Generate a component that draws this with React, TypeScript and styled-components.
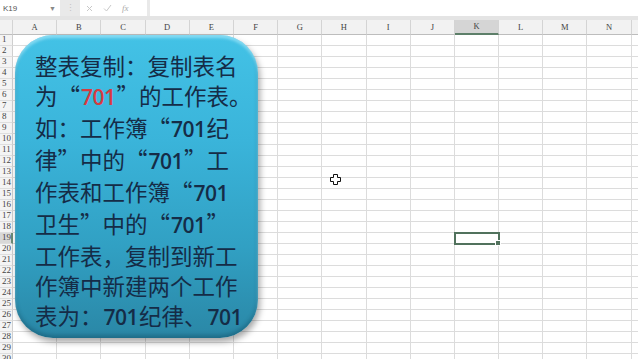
import React from "react";
import styled, { createGlobalStyle } from "styled-components";

const Global = createGlobalStyle`
  html, body { margin: 0; padding: 0; background: #ffffff; }
  body { width: 638px; height: 359px; overflow: hidden; font-family: "Liberation Sans", Arial, sans-serif; }
  #root { width: 638px; height: 359px; }
`;

const Page = styled.div`
  position: relative;
  width: 638px;
  height: 359px;
  overflow: hidden;
  display: flex;
  flex-direction: column;
  background: #ffffff;
`;

const FormulaBar = styled.div`
  display: flex;
  height: 16px;
  background: #e9e9e9;
  flex-shrink: 0;
`;

const NameBox = styled.div`
  width: 60px;
  background: #ffffff;
  display: flex;
  align-items: center;
  justify-content: space-between;
  padding: 0 4px 0 3px;
  box-sizing: border-box;
  font-family: "Liberation Sans", Arial, sans-serif;
  font-size: 8px;
  color: #555;
`;

const Caret = styled.span`
  font-size: 7px;
  color: #888;
`;

const Grip = styled.div`
  width: 20px;
  display: flex;
  align-items: center;
  justify-content: center;
  color: #c4c4c4;
  font-size: 9px;
`;

const IconArea = styled.div`
  width: 67px;
  background: #ffffff;
  display: flex;
  align-items: center;
  gap: 10px;
  padding-left: 6px;
  box-sizing: border-box;
`;

const Fx = styled.span`
  font-family: "Liberation Serif", serif;
  font-style: italic;
  font-size: 9px;
  color: #aaa;
`;

const FormulaInput = styled.div`
  flex: 1;
  margin-left: 3px;
  background: #ffffff;
`;

const Divider = styled.div`
  height: 4px;
  background: #e4e4e4;
  flex-shrink: 0;
`;

const Sheet = styled.div`
  display: grid;
  grid-template-columns: 13px repeat(15, 44.2px);
  grid-template-rows: 14.5px;
  grid-auto-rows: 11px;
  flex: 1;
  overflow: hidden;
`;

const Corner = styled.div`
  background: #f2f2f2;
  border-right: 1px solid #d4d4d4;
  border-bottom: 1px solid #bdbdbd;
  box-sizing: border-box;
`;

const ColHead = styled.div<{ $active?: boolean }>`
  background: ${(p) => (p.$active ? "#d5d5d5" : "#f2f2f2")};
  border-right: 1px solid #d4d4d4;
  border-bottom: ${(p) => (p.$active ? "2px solid #5d7f69" : "1px solid #bdbdbd")};
  box-sizing: border-box;
  display: flex;
  align-items: center;
  justify-content: center;
  font-family: "Liberation Serif", serif;
  font-size: 8.5px;
  color: #444;
`;

const RowHead = styled.div<{ $active?: boolean }>`
  background: ${(p) => (p.$active ? "#d8d8d8" : "#f4f4f4")};
  border-right: ${(p) => (p.$active ? "2px solid #6c8a76" : "1px solid #cfcfcf")};
  border-bottom: 1px solid #dedede;
  box-sizing: border-box;
  display: flex;
  align-items: center;
  padding-left: 2px;
  font-family: "Liberation Serif", serif;
  font-size: 9px;
  color: #444;
  line-height: 1;
`;

const Cell = styled.div<{ $selected?: boolean }>`
  position: relative;
  border-right: 1px solid #dcdcdc;
  border-bottom: 1px solid #dcdcdc;
  box-sizing: border-box;
  ${(p) =>
    p.$selected
      ? `outline: 2px solid #51725d; outline-offset: -1px; z-index: 2;`
      : ""}
`;

const Handle = styled.span`
  position: absolute;
  right: -3px;
  bottom: -3px;
  width: 4px;
  height: 4px;
  background: #51725d;
  border: 1px solid #fff;
`;

const Callout = styled.div`
  position: absolute;
  left: 15px;
  top: 35px;
  width: 243px;
  height: 303px;
  box-sizing: border-box;
  border-radius: 38px;
  padding: 15px 0 0 20px;
  background: linear-gradient(180deg, #43c2e6 0%, #3ab4da 35%, #31a0c3 70%, #2a87a6 100%);
  box-shadow: 2px 4px 6px rgba(0, 0, 0, 0.35), inset 0 3px 3px rgba(190, 240, 255, 0.55),
    inset 0 -3px 4px rgba(0, 40, 60, 0.3);
  color: #152c47;
  font-family: "Noto Sans CJK SC", "Noto Sans", sans-serif;
  font-size: 22.5px;
  font-weight: 400;
  line-height: 30px;
  z-index: 5;
`;

const Line = styled.div`
  white-space: nowrap;
`;

const Num = styled.span<{ $red?: boolean }>`
  font-family: "Open Sans", "Noto Sans", sans-serif;
  font-weight: 600;
  font-size: 21px;
  letter-spacing: -0.5px;
  color: ${(p) => (p.$red ? "#d83a3f" : "#152c47")};
  margin: 0 1px;
`;

const MoveCursor = styled.svg`
  position: absolute;
  left: 330px;
  top: 174px;
  z-index: 6;
`;

const cols = ["A", "B", "C", "D", "E", "F", "G", "H", "I", "J", "K", "L", "M", "N", ""];
const rows = Array.from({ length: 30 }, (_, i) => i + 1);

const N = ({ red }: { red?: boolean }) => <Num $red={red}>701</Num>;

export default function App() {
  return (
    <Page lang="zh-CN">
      <Global />
      <FormulaBar>
        <NameBox>
          <span>K19</span>
          <Caret>▼</Caret>
        </NameBox>
        <Grip>⋮</Grip>
        <IconArea>
          <svg width="7" height="7" viewBox="0 0 7 7">
            <path d="M1 1L6 6M6 1L1 6" stroke="#c8c8c8" strokeWidth="1" />
          </svg>
          <svg width="9" height="8" viewBox="0 0 9 8">
            <path d="M1 4.5L3.5 7L8 1" stroke="#c8c8c8" strokeWidth="1" fill="none" />
          </svg>
          <Fx>fx</Fx>
        </IconArea>
        <FormulaInput />
      </FormulaBar>
      <Divider />
      <Sheet>
        <Corner />
        {cols.map((c, i) => (
          <ColHead key={i} $active={c === "K"}>
            {c}
          </ColHead>
        ))}
        {rows.map((r) => (
          <React.Fragment key={r}>
            <RowHead $active={r === 19}>{r}</RowHead>
            {cols.map((c, i) => {
              const sel = r === 19 && c === "K";
              return (
                <Cell key={i} $selected={sel}>
                  {sel && <Handle />}
                </Cell>
              );
            })}
          </React.Fragment>
        ))}
      </Sheet>
      <Callout lang="zh-CN">
        <Line>整表复制：复制表名</Line>
        <Line>
          为“<N red />”的工作表。
        </Line>
        <Line>
          如：工作簿“<N />纪
        </Line>
        <Line>
          律”中的“<N />”工
        </Line>
        <Line>
          作表和工作簿“<N />
        </Line>
        <Line>
          卫生”中的“<N />”
        </Line>
        <Line>工作表，复制到新工</Line>
        <Line>作簿中新建两个工作</Line>
        <Line>
          表为：<N />纪律、<N />
        </Line>
      </Callout>
      <MoveCursor width="11" height="11" viewBox="0 0 11 11">
        <path
          d="M3.5 0.5H7.5V3.5H10.5V7.5H7.5V10.5H3.5V7.5H0.5V3.5H3.5Z"
          fill="#ffffff"
          stroke="#111"
          strokeWidth="1"
        />
      </MoveCursor>
    </Page>
  );
}
